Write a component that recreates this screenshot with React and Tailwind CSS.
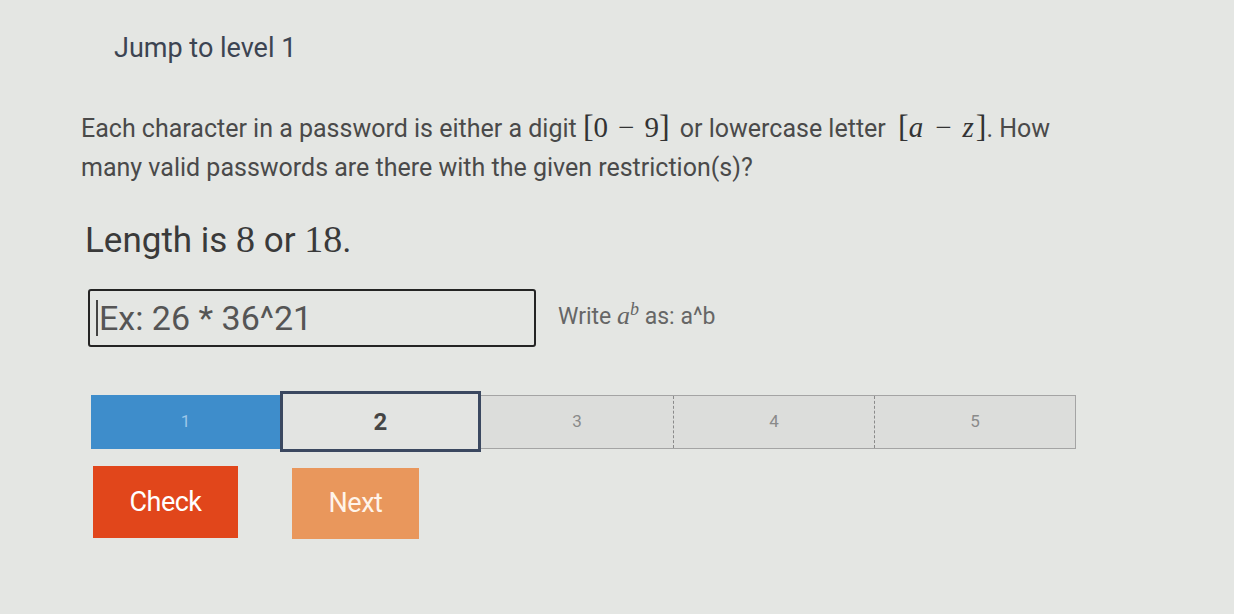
export default function App() {
  const math = { fontFamily: '"Liberation Serif", "DejaVu Serif", serif' };

  return (
    <div
      className="w-[1234px] h-[614px] overflow-hidden bg-[#e4e6e3] pl-[81px] pt-[32px] text-[#464646]"
      style={{ fontFamily: 'Roboto, "Liberation Sans", sans-serif' }}
    >
      {/* Level heading */}
      <div className="ml-[33px] text-[27px] leading-[32px] text-[#3c4452]">Jump to level 1</div>

      {/* Question */}
      <div className="mt-[43px] text-[25px] leading-[39px] text-[#4a4a4a]">
        <div className="whitespace-nowrap">
          Each character in a password is either a digit{' '}
          <span style={math} className="text-[29px] text-[#333]">
            <span className="text-[32px]">[</span>0<span className="mx-[10px]">−</span>9<span className="text-[32px]">]</span>
          </span>{' '}
          <span className="ml-[4px]">or lowercase letter</span>{' '}
          <span style={math} className="ml-[6px] text-[29px] text-[#333]">
            <span className="text-[32px]">[</span><i className="pr-[1px]">a</i><span className="mx-[11px]">−</span><i className="pr-[2px]">z</i><span className="text-[32px]">]</span>
          </span>
          . How
        </div>
        <div className="whitespace-nowrap">many valid passwords are there with the given restriction(s)?</div>
      </div>

      <div className="mt-[32px] ml-[4px] text-[35px] leading-[40px] text-[#3a3a3a]">
        Length is <span style={math} className="text-[38px]">8</span> or{' '}
        <span style={math} className="text-[38px]">18</span>.
      </div>

      {/* Answer input */}
      <div className="mt-[28px] ml-[7px] flex items-center">
        <div className="w-[448px] h-[58px] border-2 border-[#242424] rounded-[3px] flex items-center pl-[6px]">
          <span className="w-[2px] h-[36px] bg-[#444] mr-[1px]" />
          <span className="text-[34px] text-[#555]">Ex: 26 * 36^21</span>
        </div>
        <div className="ml-[22px] mb-[6px] text-[23px] text-[#666]">
          Write{' '}
          <span style={math} className="text-[26px]">
            <i>a</i>
            <sup className="text-[18px]">
              <i>b</i>
            </sup>
          </span>{' '}
          as: a^b
        </div>
      </div>

      {/* Progress */}
      <div className="mt-[44px] ml-[10px] flex items-center h-[61px]">
        <div className="w-[189px] h-[54px] bg-[#3e8dcb] flex items-center justify-center text-[17px] text-[#9cc6e8]">
          1
        </div>
        <div className="w-[201px] h-[61px] border-[3px] border-[#3b4860] bg-[#e3e4e2] flex items-center justify-center text-[24px] font-bold text-[#454545]">
          2
        </div>
        <div className="flex h-[54px] border border-l-0 border-[#a4a4a4] bg-[#dcdddb] text-[17px] text-[#8a8a8a]">
          <div className="w-[192px] flex items-center justify-center">3</div>
          <div className="w-[201px] flex items-center justify-center border-l border-dashed border-[#8a8a8a]">4</div>
          <div className="w-[201px] flex items-center justify-center border-l border-dashed border-[#8a8a8a]">5</div>
        </div>
      </div>

      {/* Actions */}
      <div className="mt-[14px] ml-[12px] flex items-start gap-[54px]">
        <button className="w-[145px] h-[72px] bg-[#e1461b] text-white text-[27px] tracking-[-0.5px]">Check</button>
        <button className="mt-[2px] w-[127px] h-[71px] bg-[#e9975c] text-[#fff4ea] text-[27px] tracking-[-0.5px]">
          Next
        </button>
      </div>
    </div>
  );
}
